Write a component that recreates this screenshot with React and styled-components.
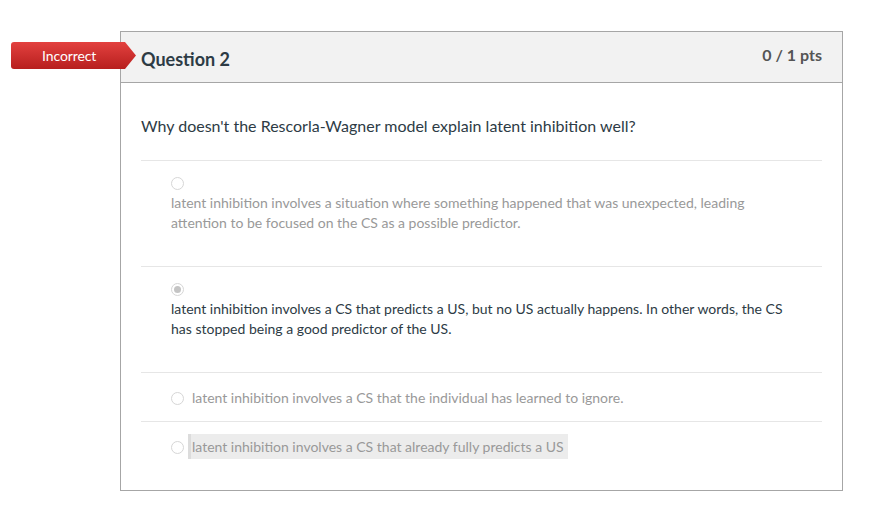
import React from 'react'
import styled, { createGlobalStyle } from 'styled-components'

const GlobalStyle = createGlobalStyle`
  body {
    margin: 0;
    background: #fff;
    font-family: Lato, "Open Sans", sans-serif;
  }
`

const Page = styled.div`
  padding: 31px 0 0 120px;
`

const Card = styled.div`
  position: relative;
  width: 721px;
  border: 1px solid #a6a6a6;
  background: #fff;
`

const Badge = styled.div`
  position: absolute;
  left: -110px;
  top: 10px;
  width: 125px;
  height: 27px;
  display: flex;
  align-items: center;
  padding-left: 31px;
  box-sizing: border-box;
  border-radius: 3px 0 0 3px;
  background: linear-gradient(#e3413f, #b71f1e);
  clip-path: polygon(0 0, calc(100% - 11px) 0, 100% 50%, calc(100% - 11px) 100%, 0 100%);
  color: #fff;
  font-size: 14px;
  letter-spacing: -0.1px;
`

const Header = styled.div`
  height: 50px;
  display: flex;
  justify-content: space-between;
  align-items: flex-start;
  padding: 0 20px;
  background: #f2f2f2;
  border-bottom: 1px solid #a6a6a6;
`

const Title = styled.h2`
  margin: 0;
  padding-top: 16px;
  font-size: 18px;
  font-weight: 700;
  color: #2d3b45;
`

const Points = styled.div`
  padding-top: 13px;
  font-size: 16px;
  font-weight: 700;
  color: #555;
`

const Body = styled.div`
  padding: 0 20px 32px;
`

const QuestionText = styled.p`
  margin: 0;
  padding: 33px 0 24px;
  font-size: 16px;
  line-height: 20px;
  color: #2d3b45;
  border-bottom: 1px solid #e6e6e6;
`

const Answer = styled.div`
  padding: ${p => (p.$last ? '15px 30px 1px' : p.$inline ? '15px 30px 13px' : '16px 30px 33px')};
  border-bottom: ${p => (p.$last ? 'none' : '1px solid #e6e6e6')};
  display: ${p => (p.$inline ? 'flex' : 'block')};
  align-items: center;
`

const Radio = styled.span`
  display: block;
  width: 13px;
  height: 13px;
  box-sizing: border-box;
  border-radius: 50%;
  border: 1px solid #d6d6d6;
  background: #fff;
  margin: ${p => (p.$inline ? '0 8px 0 0' : '0 0 3px')};
  flex-shrink: 0;
  position: relative;
  &::after {
    content: '';
    display: ${p => (p.$checked ? 'block' : 'none')};
    position: absolute;
    left: 2px;
    top: 2px;
    width: 7px;
    height: 7px;
    border-radius: 50%;
    background: #c4c4c4;
  }
`

const AnswerText = styled.div`
  font-size: 14px;
  line-height: 20px;
  color: ${p => (p.$selected ? '#2d3b45' : '#999')};
`

const Highlight = styled.div`
  margin: -3px 0 -2px -4px;
  padding: 3px 4px 2px 1px;
  border-left: 3px solid #dcdcdc;
  background: #ececec;
  font-size: 14px;
  line-height: 20px;
  color: #999;
`

export default function App() {
  return (
    <Page>
      <GlobalStyle />
      <Card>
        <Badge>Incorrect</Badge>
        <Header>
          <Title>Question 2</Title>
          <Points>0 / 1 pts</Points>
        </Header>
        <Body>
          <QuestionText>Why doesn't the Rescorla-Wagner model explain latent inhibition well?</QuestionText>
          <Answer>
            <Radio />
            <AnswerText>
              latent inhibition involves a situation where something happened that was unexpected, leading
              <br />
              attention to be focused on the CS as a possible predictor.
            </AnswerText>
          </Answer>
          <Answer>
            <Radio $checked />
            <AnswerText $selected>
              latent inhibition involves a CS that predicts a US, but no US actually happens. In other words, the CS
              <br />
              has stopped being a good predictor of the US.
            </AnswerText>
          </Answer>
          <Answer $inline>
            <Radio $inline />
            <AnswerText>latent inhibition involves a CS that the individual has learned to ignore.</AnswerText>
          </Answer>
          <Answer $inline $last>
            <Radio $inline />
            <Highlight>latent inhibition involves a CS that already fully predicts a US</Highlight>
          </Answer>
        </Body>
      </Card>
    </Page>
  )
}
